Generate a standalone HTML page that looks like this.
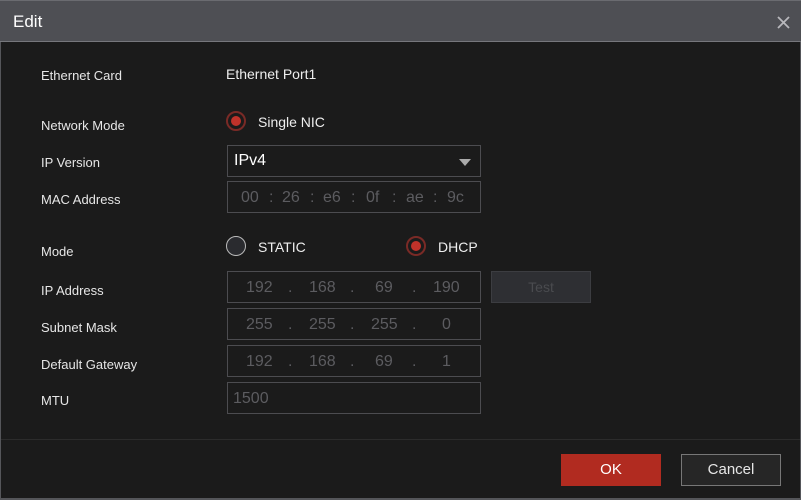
<!DOCTYPE html><html><head><style>
body{margin:0;width:801px;height:500px;background:#1b1b1b;font-family:"Liberation Sans",sans-serif;position:relative;overflow:hidden}
.a{position:absolute}
.hdr{left:0;top:0;width:801px;height:42px;background:#4e4f54;border-top:1px solid #6a6b70;border-bottom:1px solid #76777c;box-sizing:border-box}
.lbl{left:41px;font-size:13px;color:#e6e6e6}
.box{left:227px;width:254px;height:32px;border:1px solid #4c4c50;box-sizing:border-box}
.g{color:#5c5c60;font-size:16px}
.r{width:20px;height:20px;border-radius:50%;box-sizing:border-box}
.on{border:2px solid #7a2a26;background:#1b1b1b}
.on:after{content:"";position:absolute;left:3px;top:3px;width:10px;height:10px;border-radius:50%;background:#c0322a}
.t{font-size:14px;color:#eee}
</style></head><body>
<div class="a" style="left:0;top:0;width:1px;height:500px;background:#55565a"></div>
<div class="a" style="right:0;top:0;width:1px;height:500px;background:#55565a"></div>
<div class="a" style="left:0;bottom:0;width:801px;height:2px;background:#55565a"></div>
<div class="a hdr"><span class="a" style="left:13px;top:11px;font-size:17px;color:#fff">Edit</span>
<svg class="a" style="left:777px;top:15px" width="13" height="13"><path d="M1 1L12 12M12 1L1 12" stroke="#b8b8bc" stroke-width="1.8"/></svg></div>
<div class="a lbl" style="top:68px">Ethernet Card</div>
<div class="a t" style="left:226px;top:66px">Ethernet Port1</div>
<div class="a lbl" style="top:118px">Network Mode</div>
<div class="a r on" style="left:226px;top:111px"></div><div class="a t" style="left:258px;top:114px">Single NIC</div>
<div class="a lbl" style="top:155px">IP Version</div>
<div class="a box" style="top:145px"><span class="a" style="left:6px;top:6px;font-size:16px;color:#fff">IPv4</span>
<svg class="a" style="left:231px;top:13px" width="12" height="7"><path d="M0 0H12L6 7Z" fill="#aaa"/></svg></div>
<div class="a lbl" style="top:192px">MAC Address</div>
<div class="a box g" style="top:181px">
<span class="a" style="left:13px;top:7px">00</span><span class="a" style="left:41px;top:7px">:</span>
<span class="a" style="left:54px;top:7px">26</span><span class="a" style="left:82px;top:7px">:</span>
<span class="a" style="left:95px;top:7px">e6</span><span class="a" style="left:123px;top:7px">:</span>
<span class="a" style="left:138px;top:7px">0f</span><span class="a" style="left:164px;top:7px">:</span>
<span class="a" style="left:178px;top:7px">ae</span><span class="a" style="left:205px;top:7px">:</span>
<span class="a" style="left:219px;top:7px">9c</span></div>
<div class="a lbl" style="top:244px">Mode</div>
<div class="a r" style="left:226px;top:236px;border:1.5px solid #bbb;background:#2a2b2f"></div><div class="a t" style="left:258px;top:239px">STATIC</div>
<div class="a r on" style="left:406px;top:236px"></div><div class="a t" style="left:438px;top:239px">DHCP</div>
<div class="a lbl" style="top:283px">IP Address</div>
<div class="a lbl" style="top:320px">Subnet Mask</div>
<div class="a lbl" style="top:357px">Default Gateway</div>
<div class="a lbl" style="top:393px">MTU</div>
<div class="a box g" style="top:271px"><span class="a" style="left:18px;top:7px">192</span><span class="a" style="left:60px;top:7px">.</span><span class="a" style="left:81px;top:7px">168</span><span class="a" style="left:122px;top:7px">.</span><span class="a" style="left:147px;top:7px">69</span><span class="a" style="left:184px;top:7px">.</span><span class="a" style="left:205px;top:7px">190</span></div>
<div class="a box g" style="top:308px"><span class="a" style="left:18px;top:7px">255</span><span class="a" style="left:60px;top:7px">.</span><span class="a" style="left:81px;top:7px">255</span><span class="a" style="left:122px;top:7px">.</span><span class="a" style="left:143px;top:7px">255</span><span class="a" style="left:184px;top:7px">.</span><span class="a" style="left:214px;top:7px">0</span></div>
<div class="a box g" style="top:345px"><span class="a" style="left:18px;top:7px">192</span><span class="a" style="left:60px;top:7px">.</span><span class="a" style="left:81px;top:7px">168</span><span class="a" style="left:122px;top:7px">.</span><span class="a" style="left:147px;top:7px">69</span><span class="a" style="left:184px;top:7px">.</span><span class="a" style="left:214px;top:7px">1</span></div>
<div class="a box g" style="top:382px"><span class="a" style="left:5px;top:7px">1500</span></div>
<div class="a" style="left:491px;top:271px;width:100px;height:32px;background:#2e2f33;border:1px solid #3c3d41;box-sizing:border-box;color:#4a4b4f;font-size:14px;text-align:center;line-height:30px">Test</div>
<div class="a" style="left:1px;top:439px;width:799px;height:1px;background:#2c2c2c"></div>
<div class="a" style="left:561px;top:454px;width:100px;height:32px;background:#b12b20;color:#fff;font-size:15px;text-align:center;line-height:32px">OK</div>
<div class="a" style="left:681px;top:454px;width:100px;height:32px;background:#262626;border:1px solid #777;box-sizing:border-box;color:#e6e6e6;font-size:15px;text-align:center;line-height:30px">Cancel</div>
</body></html>
